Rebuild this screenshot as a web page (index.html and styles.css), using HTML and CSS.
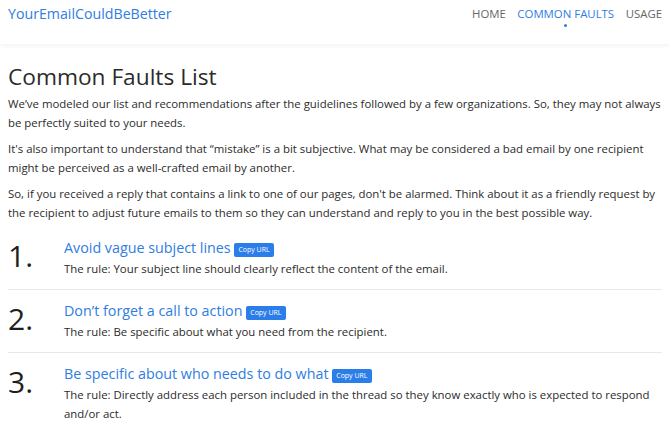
FILE: index.html
```html
<!DOCTYPE html>
<html lang="en">
<head>
    <meta charset="UTF-8">
    <meta name="viewport" content="width=device-width, initial-scale=1.0">
    <title>Common Faults List</title>
    <link rel="stylesheet" href="styles.css">
</head>
<body>
    <header class="topbar">
        <a class="brand" href="#">YourEmailCouldBeBetter</a>
        <nav class="menu">
            <a href="#">Home</a>
            <a href="#" class="active">Common Faults</a>
            <a href="#">Usage</a>
        </nav>
    </header>

    <main class="content">
        <h1>Common Faults List</h1>
        <p>We’ve modeled our list and recommendations after the guidelines followed by a few organizations. So, they may not always be perfectly suited to your needs.</p>
        <p>It's also important to understand that “mistake” is a bit subjective. What may be considered a bad email by one recipient might be perceived as a well-crafted email by another.</p>
        <p>So, if you received a reply that contains a link to one of our pages, don't be alarmed. Think about it as a friendly request by the recipient to adjust future emails to them so they can understand and reply to you in the best possible way.</p>

        <ol class="faults">
            <li class="fault">
                <div class="num">1.</div>
                <div class="body">
                    <h2><a href="#">Avoid vague subject lines</a> <button class="copy">Copy URL</button></h2>
                    <p>The rule: Your subject line should clearly reflect the content of the email.</p>
                </div>
            </li>
            <li class="fault">
                <div class="num">2.</div>
                <div class="body">
                    <h2><a href="#">Don’t forget a call to action</a> <button class="copy">Copy URL</button></h2>
                    <p>The rule: Be specific about what you need from the recipient.</p>
                </div>
            </li>
            <li class="fault">
                <div class="num">3.</div>
                <div class="body">
                    <h2><a href="#">Be specific about who needs to do what</a> <button class="copy">Copy URL</button></h2>
                    <p>The rule: Directly address each person included in the thread so they know exactly who is expected to respond and/or act.</p>
                </div>
            </li>
        </ol>
    </main>
</body>
</html>
```

FILE: styles.css
```css
/* Base */
body {
    font-family: 'Open Sans', sans-serif;
    color: #2b2b2b;
    margin: 0;
    background: #fff;
}

a {
    text-decoration: none;
}

/* Barra in alto */
.topbar {
    display: flex;
    justify-content: space-between;
    align-items: flex-start;
    height: 44px;
    padding: 0 8px;
    box-shadow: 0 2px 4px rgba(0, 0, 0, 0.05);
}

.brand {
    color: #2f7de1;
    font-size: 14.2px;
    line-height: 28px;
}

.menu {
    display: flex;
    gap: 11.5px;
}

.menu a {
    position: relative;
    color: #666;
    font-size: 11.4px;
    line-height: 28px;
    text-transform: uppercase;
}

.menu a.active {
    color: #2f7de1;
}

.menu a.active::after {
    content: '';
    position: absolute;
    left: 50%;
    top: 24px;
    width: 3px;
    height: 3px;
    margin-left: -1.5px;
    border-radius: 50%;
    background: #2f7de1;
}

/* Contenuto */
.content {
    padding: 18px 8px 0;
}

h1 {
    font-size: 22.7px;
    font-weight: 400;
    margin: 0 0 2px;
    line-height: 30px;
}

.content > p {
    font-size: 11.4px;
    line-height: 19px;
    margin: 0 0 7px;
}

.content > p:last-of-type {
    margin-bottom: 5px;
}

/* Lista */
.faults {
    list-style: none;
    margin: 0;
    padding: 0;
}

.fault {
    display: flex;
    padding: 10px 0 11px;
    border-bottom: 1px solid #e8e8e8;
}

.fault:last-child {
    border-bottom: none;
}

.num {
    width: 56px;
    font-size: 30px;
    font-weight: 500;
    line-height: 32px;
    padding-top: 3px;
    color: #1e1e1e;
}

.body {
    flex: 1;
}

.body h2 {
    margin: 0;
    font-size: 14.3px;
    font-weight: 400;
    line-height: 22px;
}

.body h2 a {
    color: #2f7de1;
}

.copy {
    font-family: 'Open Sans', sans-serif;
    font-size: 7px;
    line-height: 8px;
    color: #fff;
    background: #2b7de9;
    border: none;
    border-radius: 2px;
    padding: 3px 4px;
    vertical-align: 1px;
}

.body p {
    margin: 0;
    font-size: 11.4px;
    line-height: 19px;
}
```
